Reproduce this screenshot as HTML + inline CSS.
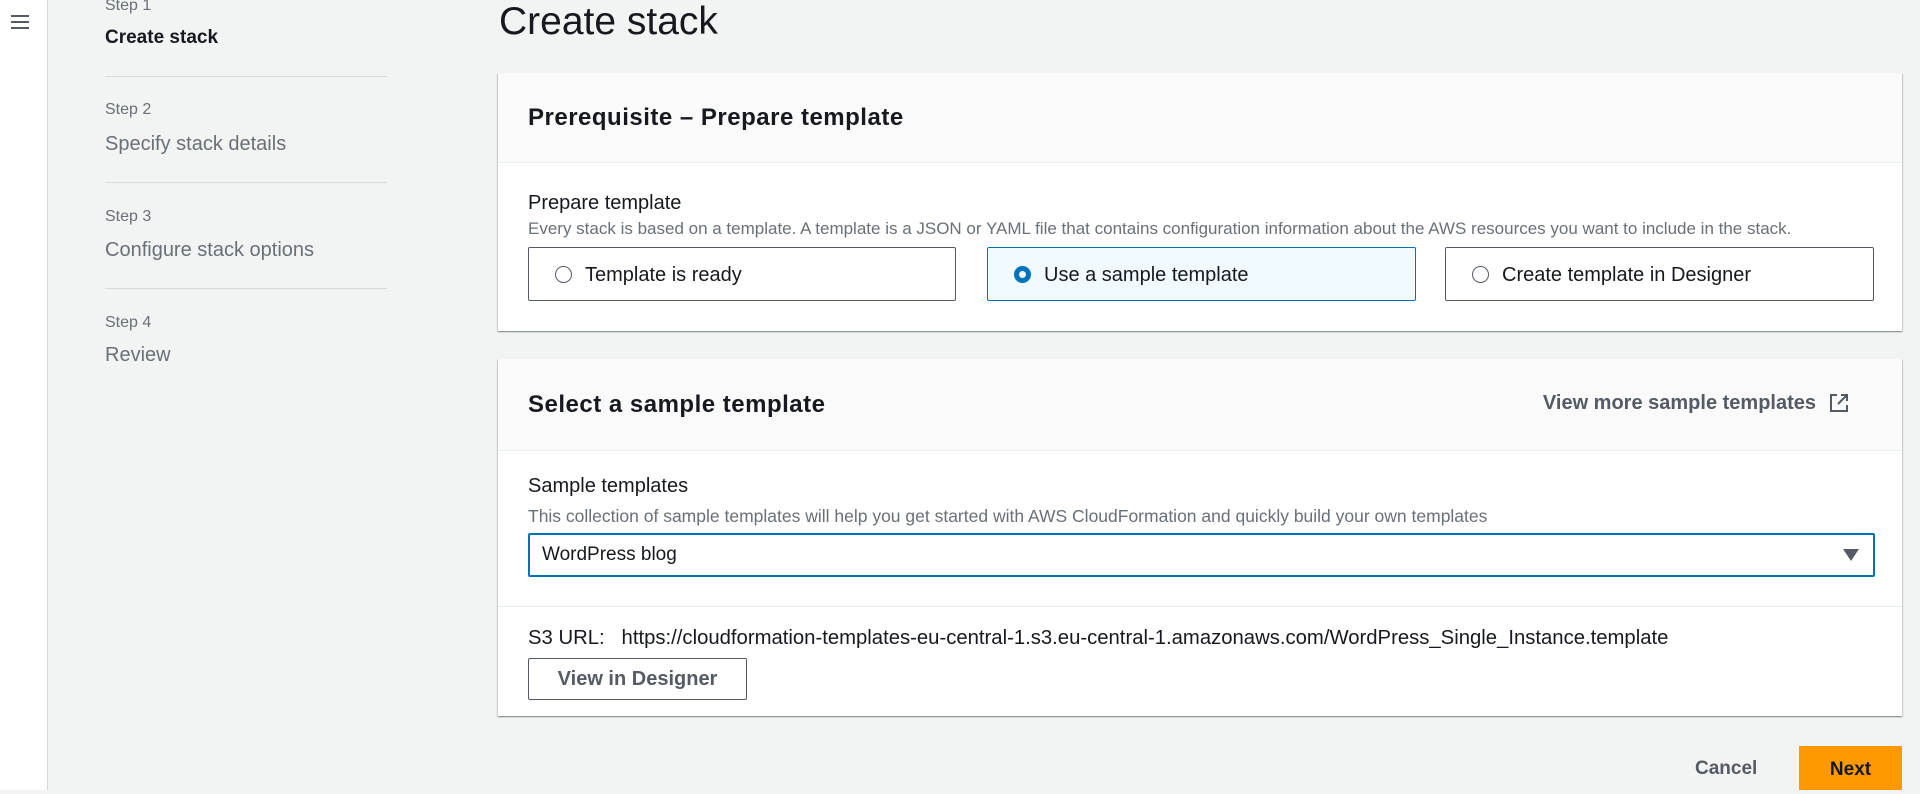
<!DOCTYPE html>
<html><head><meta charset="utf-8"><style>
*{box-sizing:border-box;margin:0;padding:0}
body{width:1920px;height:790px;overflow:hidden;background:#f2f3f3;font-family:"Liberation Sans",sans-serif;color:#16191f;position:relative}
.abs{position:absolute;white-space:nowrap}
.side{position:absolute;left:0;top:0;width:48px;height:790px;background:#fff;border-right:1px solid #d5dbdb}
.ham{position:absolute;left:11px;top:15px;width:18px}
.ham i{display:block;height:2px;background:#545b64;margin-bottom:4px}
.sl{font-size:16px;color:#687078}
.st{font-size:20px;color:#687078}
.div{position:absolute;left:105px;width:282px;height:1px;background:#d5dbdb}
.panel{position:absolute;left:498px;width:1404px;background:#fff;box-shadow:0 1px 1px rgba(0,28,36,.3),1px 1px 1px rgba(0,28,36,.15),-1px 1px 1px rgba(0,28,36,.15)}
.ph{position:absolute;left:0;top:0;width:100%;background:#fafafa;border-bottom:1px solid #eaeded}
.h2{font-size:24px;font-weight:bold;letter-spacing:0.5px}
.tile{position:absolute;top:174px;height:54px;border:1px solid #545b64;border-radius:2px;font-size:20px;padding-left:56px;line-height:54px}
.tile .r{position:absolute;left:26px;top:18px;width:17px;height:17px;border:1.5px solid #545b64;border-radius:50%}
.tile.sel{background:#f1faff;border-color:#0073bb}
.tile.sel .r{border:5px solid #0073bb}
</style></head><body>
<div class="side"><div class="ham"><i></i><i></i><i></i></div></div>
<div class="abs sl" style="left:105px;top:-3px">Step 1</div>
<div class="abs st" style="left:105px;top:27px;color:#16191f;font-weight:bold;font-size:19px">Create stack</div>
<div class="div" style="top:76px"></div>
<div class="abs sl" style="left:105px;top:101px">Step 2</div>
<div class="abs st" style="left:105px;top:133px">Specify stack details</div>
<div class="div" style="top:182px"></div>
<div class="abs sl" style="left:105px;top:208px">Step 3</div>
<div class="abs st" style="left:105px;top:239px">Configure stack options</div>
<div class="div" style="top:288px"></div>
<div class="abs sl" style="left:105px;top:314px">Step 4</div>
<div class="abs st" style="left:105px;top:344px">Review</div>
<div class="abs" style="left:499px;top:0px;font-size:39px">Create stack</div>

<div class="panel" style="top:73px;height:258px">
 <div class="ph" style="height:90px"><div class="abs h2" style="left:30px;top:31px">Prerequisite – Prepare template</div></div>
 <div class="abs" style="left:30px;top:119px;font-size:20px">Prepare template</div>
 <div class="abs" style="left:30px;top:146px;font-size:17px;color:#687078">Every stack is based on a template. A template is a JSON or YAML file that contains configuration information about the AWS resources you want to include in the stack.</div>
 <div class="tile" style="left:30px;width:428px"><span class="r"></span>Template is ready</div>
 <div class="tile sel" style="left:489px;width:429px"><span class="r"></span>Use a sample template</div>
 <div class="tile" style="left:947px;width:429px"><span class="r"></span>Create template in Designer</div>
</div>

<div class="panel" style="top:359px;height:357px">
 <div class="ph" style="height:92px"><div class="abs h2" style="left:30px;top:32px">Select a sample template</div>
  <div class="abs" style="right:86px;top:33px;font-size:20px;font-weight:bold;color:#545b64">View more sample templates</div>
  <svg class="abs" style="right:52px;top:33px" width="22" height="22" viewBox="0 0 22 22" fill="none" stroke="#545b64" stroke-width="2"><path d="M9 3H3v16h16v-6M13 3h6v6M19 3l-9 9"/></svg>
 </div>
 <div class="abs" style="left:30px;top:116px;font-size:20px">Sample templates</div>
 <div class="abs" style="left:30px;top:147px;font-size:17.5px;color:#687078">This collection of sample templates will help you get started with AWS CloudFormation and quickly build your own templates</div>
 <div class="abs" style="left:30px;top:174px;width:1347px;height:44px;border:2px solid #0073bb;border-radius:2px;font-size:19px;padding-left:12px;line-height:40px">WordPress blog
  <svg class="abs" style="right:14px;top:14px" width="16" height="12"><path d="M0 0h16L8 12z" fill="#545b64"/></svg></div>
 <div class="abs" style="left:0;top:247px;width:100%;height:1px;background:#eaeded"></div>
 <div class="abs" style="left:30px;top:268px;font-size:20.3px">S3 URL:&nbsp;&nbsp; https://cloudformation-templates-eu-central-1.s3.eu-central-1.amazonaws.com/WordPress_Single_Instance.template</div>
 <div class="abs" style="left:30px;top:299px;width:219px;height:42px;border:1.5px solid #545b64;border-radius:2px;font-size:20px;font-weight:bold;color:#545b64;text-align:center;line-height:40px">View in Designer</div>
</div>

<div class="abs" style="left:1695px;top:758px;font-size:19px;font-weight:bold;color:#545b64">Cancel</div>
<div class="abs" style="left:1799px;top:746px;width:103px;height:44px;background:#ff9900;font-size:19px;font-weight:bold;text-align:center;line-height:48px">Next</div>
</body></html>
